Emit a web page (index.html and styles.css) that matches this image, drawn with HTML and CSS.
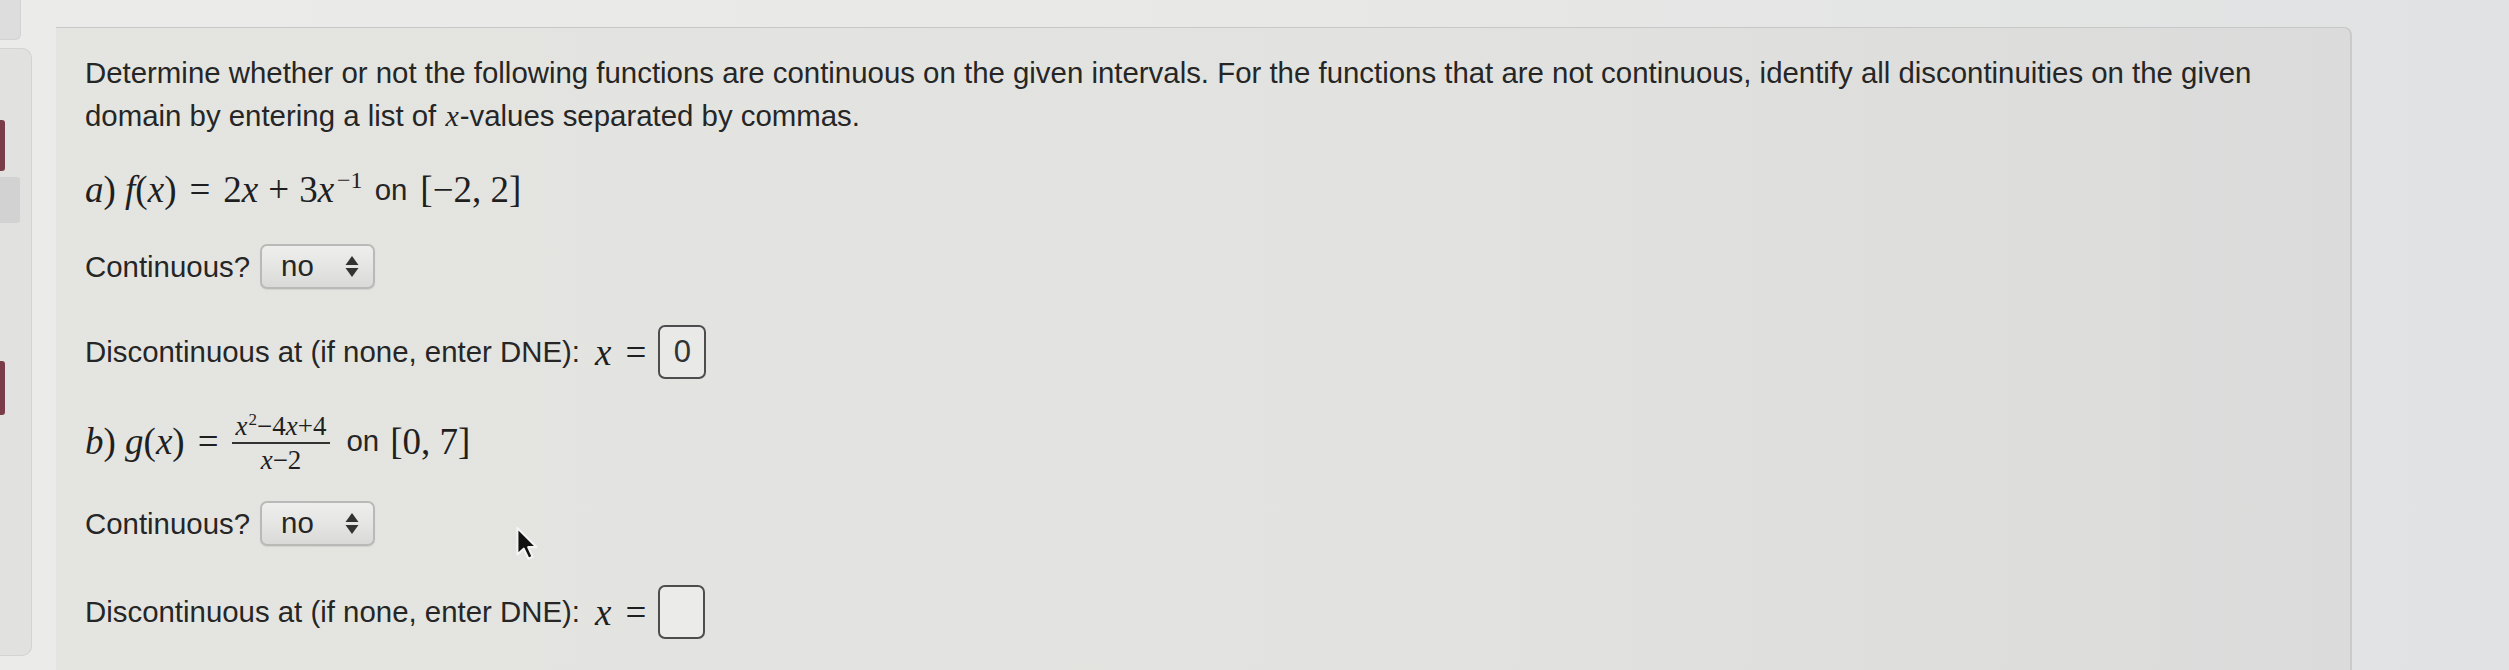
FILE: index.html
```html
<!DOCTYPE html>
<html lang="en">
<head>
<meta charset="utf-8">
<title>Continuity question</title>
<link rel="stylesheet" href="styles.css">
</head>
<body>
<div class="page">
  <aside class="sidebar">
    <div class="tab-top"></div>
    <div class="panel">
      <div class="mark red first"></div>
      <div class="mark gray"></div>
      <div class="mark red second"></div>
    </div>
  </aside>

  <main class="card">
    <p class="intro">Determine whether or not the following functions are continuous on the given intervals. For the functions that are not continuous, identify all discontinuities on the given domain by entering a list of <i class="mx">x</i>-values separated by commas.</p>

    <div class="row formula row-a">
      <span class="m"><i>a</i>) <i>f</i>(<i>x</i>)<span class="rel">=</span>2<i>x</i><span class="bin">+</span>3<i>x</i><sup>−1</sup></span>
      <span class="word">on</span>
      <span class="m">[−2, 2]</span>
    </div>

    <div class="row choice row-c1">
      <span class="label">Continuous?</span>
      <span class="select">
        <span class="select-value">no</span>
        <svg class="arrows" width="14" height="22" viewBox="0 0 14 22"><path d="M7 0 L13.5 9 L0.5 9 Z M0.5 12 L13.5 12 L7 21 Z" fill="#333"/></svg>
      </span>
    </div>

    <div class="row answer row-d1">
      <span class="label">Discontinuous at (if none, enter DNE):</span>
      <span class="m eq"><i>x</i><span class="rel">=</span></span>
      <span class="input">0</span>
    </div>

    <div class="row formula row-b">
      <span class="m"><i>b</i>) <i>g</i>(<i>x</i>)<span class="rel">=</span></span>
      <span class="frac">
        <span class="num"><i>x</i><sup>2</sup>−4<i>x</i>+4</span>
        <span class="den"><i>x</i>−2</span>
      </span>
      <span class="word">on</span>
      <span class="m">[0, 7]</span>
    </div>

    <div class="row choice row-c2">
      <span class="label">Continuous?</span>
      <span class="select">
        <span class="select-value">no</span>
        <svg class="arrows" width="14" height="22" viewBox="0 0 14 22"><path d="M7 0 L13.5 9 L0.5 9 Z M0.5 12 L13.5 12 L7 21 Z" fill="#333"/></svg>
      </span>
    </div>

    <div class="row answer row-d2">
      <span class="label">Discontinuous at (if none, enter DNE):</span>
      <span class="m eq"><i>x</i><span class="rel">=</span></span>
      <span class="input empty"></span>
    </div>
  </main>

  <svg class="cursor" width="28" height="38" viewBox="0 0 26 36">
    <path d="M2 2 L2 27 L8 21.5 L12.5 31 L16.5 29.2 L12.2 20 L20 20 Z" fill="#111" stroke="#f4f4f4" stroke-width="2" stroke-linejoin="round"/>
  </svg>
</div>
</body>
</html>
```

FILE: styles.css
```css
html, body {
  margin: 0;
  padding: 0;
}

body {
  width: 2509px;
  height: 670px;
  overflow: hidden;
  background: linear-gradient(90deg, #ebebea 0%, #e8e8e6 50%, #e0e2e3 100%);
  font-family: "Liberation Sans", Arial, sans-serif;
  color: #262626;
}

.page {
  position: relative;
  display: flex;
  align-items: flex-start;
  height: 670px;
}

/* left sidebar fragments */
.sidebar {
  width: 32px;
  flex: none;
  display: flex;
  flex-direction: column;
}

.tab-top {
  width: 21px;
  height: 40px;
  background: #dddddd;
  border: 1px solid #d2d2d2;
  border-left: none;
  border-top: none;
  border-radius: 0 0 6px 0;
  box-sizing: border-box;
}

.panel {
  margin-top: 8px;
  width: 32px;
  height: 608px;
  box-sizing: border-box;
  background: #e1e1e0;
  border: 1px solid #d3d3d2;
  border-left: none;
  border-radius: 0 10px 10px 0;
  padding-top: 71px;
  display: flex;
  flex-direction: column;
  align-items: flex-start;
}

.mark {
  width: 5px;
  border-radius: 0 3px 3px 0;
}

.mark.red {
  background: #7b3c4a;
}

.mark.first {
  height: 51px;
}

.mark.gray {
  margin-top: 6px;
  width: 20px;
  height: 46px;
  background: #d2d2d2;
}

.mark.second {
  margin-top: 138px;
  height: 54px;
}

/* main card */
.card {
  margin-left: 24px;
  margin-top: 27px;
  width: 2296px;
  height: 660px;
  box-sizing: border-box;
  background: linear-gradient(90deg, #e4e5e1 0%, #e2e3e0 60%, #dadbda 100%);
  border-top: 1px solid #c8c8c6;
  border-right: 2px solid #c9cacb;
  border-radius: 0 8px 0 0;
  padding: 23px 40px 0 29px;
}

.intro {
  margin: 0;
  font-size: 29.4px;
  line-height: 43px;
}

.mx {
  font-family: "Liberation Serif", "Times New Roman", serif;
  font-style: italic;
  font-size: 30px;
  line-height: 1;
  padding: 0 1px;
}

.row {
  display: flex;
  align-items: center;
  font-size: 29.4px;
}

.m {
  font-family: "Liberation Serif", "Times New Roman", serif;
  font-size: 37px;
  line-height: 43px;
  color: #1f1f1f;
}

.m i {
  font-style: italic;
}

.rel {
  margin: 0 13px;
}

.bin {
  margin: 0 10px;
}

.m sup {
  font-size: 24px;
  line-height: 0;
  vertical-align: 14px;
  margin-left: 3px;
}

.word {
  margin: 0 13px 0 12px;
}

.formula {
  height: 43px;
}

.row-a {
  margin-top: 31px;
}

.row-b {
  margin-top: 32px;
  height: 60px;
}

.row-b .m:last-child {
  margin-left: -2px;
}

.row-c1 {
  margin-top: 33px;
}

.row-c2 {
  margin-top: 30px;
}

.row-d1 {
  margin-top: 36px;
}

.row-d2 {
  margin-top: 39px;
}

.choice {
  height: 45px;
}

.answer {
  height: 54px;
}

.select {
  margin-left: 10px;
  width: 115px;
  height: 45px;
  box-sizing: border-box;
  display: flex;
  align-items: center;
  justify-content: space-between;
  padding: 0 14px 0 19px;
  border: 2px solid #b9b9b8;
  border-radius: 7px;
  background: linear-gradient(180deg, #eeeeed 0%, #e4e4e3 55%, #d9d9d8 100%);
  box-shadow: 0 1px 1px rgba(0, 0, 0, 0.08);
  font-size: 29.4px;
}

.select-value {
  line-height: 1;
  margin-top: -2px;
}

.arrows {
  display: block;
}

.eq {
  margin-left: 15px;
  display: flex;
  align-items: center;
}

.eq .rel {
  margin: 0 12px 0 14px;
}

.input {
  width: 48px;
  height: 54px;
  box-sizing: border-box;
  border: 2px solid #4d4d4d;
  border-radius: 7px;
  background: #e9eae7;
  display: flex;
  align-items: center;
  justify-content: center;
  font-size: 31px;
  color: #333;
}

.input.empty {
  width: 47px;
  background: #ebebe9;
}

.frac {
  display: inline-flex;
  flex-direction: column;
  align-items: center;
  margin: 4px 2px 0 0;
  font-family: "Liberation Serif", "Times New Roman", serif;
  font-size: 27px;
  color: #1f1f1f;
}

.frac .num {
  padding: 0 4px 2px;
  border-bottom: 2px solid #333;
  line-height: 1;
}

.frac .num sup {
  font-size: 17px;
  line-height: 0;
  vertical-align: 10px;
  margin-left: 1px;
}

.frac .den {
  padding-top: 3px;
  line-height: 1;
}

.row-b .word {
  margin-left: 14px;
}

/* mouse pointer drawn on top of the page */
.cursor {
  position: absolute;
  left: 515px;
  top: 526px;
}
```
